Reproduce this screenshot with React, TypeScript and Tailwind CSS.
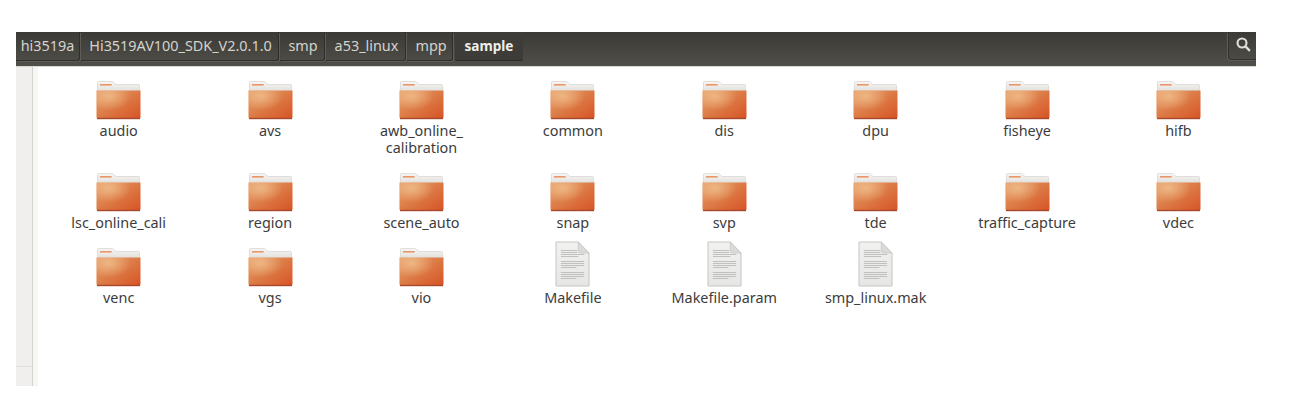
const crumbs = [
  { t: "hi3519a", w: "w-[64px]" },
  { t: "Hi3519AV100_SDK_V2.0.1.0", w: "w-[198px] pl-[2px]" },
  { t: "smp", w: "w-[45px] pl-[2px]" },
  { t: "a53_linux", w: "w-[80px] pl-[2px]" },
  { t: "mpp", w: "w-[46px] pl-[3px]" },
];

const items: { n: string; f?: boolean }[] = [
  { n: "audio" }, { n: "avs" }, { n: "awb_online_ calibration" }, { n: "common" }, { n: "dis" }, { n: "dpu" }, { n: "fisheye" }, { n: "hifb" },
  { n: "lsc_online_cali" }, { n: "region" }, { n: "scene_auto" }, { n: "snap" }, { n: "svp" }, { n: "tde" }, { n: "traffic_capture" }, { n: "vdec" },
  { n: "venc" }, { n: "vgs" }, { n: "vio" }, { n: "Makefile", f: true }, { n: "Makefile.param", f: true }, { n: "smp_linux.mak", f: true },
];

function Folder() {
  return (
    <svg width="45" height="39" viewBox="0 0 46 39" preserveAspectRatio="none" className="blur-[0.3px]">
      <defs>
        <linearGradient id="fb" x1="0" y1="0" x2="1" y2="1">
          <stop offset="0" stopColor="#e8a070" />
          <stop offset="0.5" stopColor="#dc7a45" />
          <stop offset="1" stopColor="#d75225" />
        </linearGradient>
        <radialGradient id="fh" cx="0.28" cy="0.2" r="0.5">
          <stop offset="0" stopColor="#f0c08c" stopOpacity="0.8" />
          <stop offset="1" stopColor="#f0c08c" stopOpacity="0" />
        </radialGradient>
        <linearGradient id="fp" x1="0" y1="0" x2="0" y2="1">
          <stop offset="0" stopColor="#f7f6f4" />
          <stop offset="1" stopColor="#dedcd8" />
        </linearGradient>
      </defs>
      <path d="M1.5 10V1.5Q1.5 .5 2.5 .5H17L20.5 3.5H43.5Q44.5 3.5 44.5 4.5V12H1.5Z" fill="url(#fp)" stroke="#cfccc7" strokeWidth="0.6" />
      <rect x="4" y="3" width="12" height="1.6" fill="#e8966a" />
      <path d="M.5 9.5H45.5V36Q45.5 38 43.5 38H2.5Q.5 38 .5 36Z" fill="url(#fb)" />
      <path d="M.5 9.5H45.5V36Q45.5 38 43.5 38H2.5Q.5 38 .5 36Z" fill="url(#fh)" />
      <rect x="1" y="36.8" width="44" height="1.4" fill="#a8482a" />
    </svg>
  );
}

function Doc() {
  const rows = [9, 11, 13, 15, 20, 22, 24, 26, 31, 33, 35, 37];
  return (
    <svg width="35" height="46" viewBox="0 0 36 46" preserveAspectRatio="none" className="blur-[0.3px]">
      <defs>
        <linearGradient id="dg" x1="0" y1="0" x2="0" y2="1">
          <stop offset="0" stopColor="#f1f1ef" />
          <stop offset="1" stopColor="#e6e6e4" />
        </linearGradient>
      </defs>
      <path d="M1 1H24L35 12V45H1Z" fill="url(#dg)" stroke="#c6c5c2" strokeWidth="1" />
      <path d="M24 1L35 12H26Q24 12 24 10Z" fill="#dadad8" stroke="#c6c5c2" strokeWidth="0.7" />
      {rows.map((y, i) => (
        <rect key={y} x="6" y={y} width={y < 16 ? (i % 4 === 3 ? 18 : y < 12 ? 17 : 24) : i % 4 === 3 ? 16 : 24} height="1" fill="#c0c0be" />
      ))}
    </svg>
  );
}

export default function App() {
  return (
    <div className="h-[418px] w-[1306px] bg-white pl-4 pr-[50px] pt-8 font-['Noto_Sans','Open_Sans',sans-serif]">
      <div className="flex h-[354px] flex-col">
        <header className="flex h-[35px] shrink-0 items-stretch border-b border-[#d8d7d3] bg-gradient-to-b from-[#3b3a36] to-[#504f49] text-[14.4px] text-[#d4d3ce]">
          <nav className="flex h-[29px] items-stretch">
            {crumbs.map((c) => (
              <span key={c.t} className={`flex items-center justify-center rounded-br-[3px] border-r border-b border-[#2f2e2b] shadow-[1px_1px_0_#5d5c56] ${c.w} mr-px whitespace-nowrap`}>
                {c.t}
              </span>
            ))}
            <span className="ml-px flex w-[68px] items-center justify-center rounded-b-[2px] border-b border-[#2c2b28] bg-[#3d3c38] text-[13.6px] font-bold text-[#eeeeec]">
              sample
            </span>
          </nav>
          <div className="ml-auto flex h-[28px] w-[28px] items-center justify-center rounded-bl-[4px] border-b border-l border-[#33322e] shadow-[-1px_1px_0_#5d5c56]">
            <svg width="17" height="17" viewBox="0 0 16 16" fill="none" stroke="#dededb" className="translate-x-[1px] translate-y-[-1px]">
              <circle cx="6.6" cy="6.6" r="4.2" strokeWidth="2" />
              <path d="M9.8 9.8L14 14" strokeWidth="2.2" />
            </svg>
          </div>
        </header>
        <div className="flex min-h-0 flex-1">
          <aside className="w-4 shrink-0 bg-[#f0efed]">
            <div className="h-[300px] border-b border-[#e2e1de]" />
          </aside>
          <div className="w-px shrink-0 bg-[#d4d3d0]" />
          <div className="w-[5px] shrink-0 bg-[#f6f6f5]" />
          <main className="grid flex-1 grid-cols-[repeat(8,151.4px)] content-start gap-y-[10px] pl-[5px] pt-[7px] text-[14.4px] leading-[17px] text-[#3c3c3c]">
            {items.map((it) => (
              <div key={it.n} className="flex flex-col items-center text-center">
                <div className="flex h-[46px] items-end">{it.f ? <Doc /> : <Folder />}</div>
                <div className="mt-[2px] w-[125px] whitespace-pre-line">{it.n.replace(" ", "\n")}</div>
              </div>
            ))}
          </main>
        </div>
      </div>
    </div>
  );
}
